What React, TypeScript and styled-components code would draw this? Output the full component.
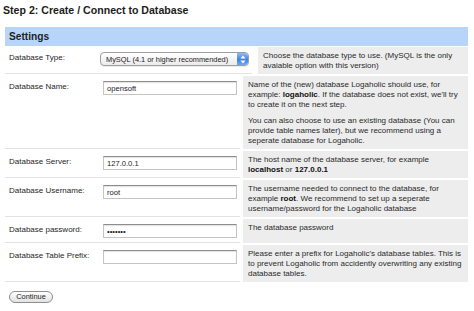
import React from "react";
import styled, { createGlobalStyle } from "styled-components";

const GlobalStyle = createGlobalStyle`
  html, body {
    margin: 0;
    padding: 0;
    background: #fff;
  }
  body {
    font-family: "Liberation Sans", Arial, Helvetica, sans-serif;
    color: #222;
  }
`;

const Page = styled.div`
  width: 474px;
  height: 311px;
  padding: 0 6px 0 5px;
  box-sizing: border-box;
  overflow: hidden;
`;

const Title = styled.h2`
  margin: 0 0 0 -2px;
  padding-top: 4px;
  height: 23px;
  box-sizing: border-box;
  font-size: 10.6px;
  font-weight: bold;
  line-height: 13px;
  color: #1c1c1c;
`;

const SectionHeader = styled.div`
  height: 19px;
  margin-top: 4px;
  background: #b7d5f8;
  display: flex;
  align-items: center;
  padding-left: 4px;
  font-size: 10.2px;
  font-weight: bold;
  color: #222;
  margin-bottom: 1px;
`;

const Rows = styled.div`
  display: flex;
  flex-direction: column;
  gap: 2px;
`;

const Row = styled.div`
  display: flex;
  align-items: stretch;
`;

const Field = styled.div<{ $width: number; $gap: number }>`
  width: ${(p) => p.$width}px;
  margin-right: ${(p) => p.$gap}px;
  flex-shrink: 0;
  display: flex;
  align-items: flex-start;
  padding: 5px 0 4px;
  box-sizing: border-box;
  border-bottom: 1px solid #e3e3e3;
`;

const Label = styled.div<{ $width: number }>`
  width: ${(p) => p.$width}px;
  padding-left: 4px;
  box-sizing: border-box;
  font-size: 8px;
  line-height: 12px;
  color: #262626;
`;

const Desc = styled.div`
  flex: 1;
  background: #ededed;
  padding: 4px 4px 3px 5px;
  font-size: 8px;
  line-height: 10px;
  color: #2a2a2a;

  b {
    font-weight: bold;
    color: #111;
  }
`;

const Para = styled.p`
  margin: 0;
  & + & {
    margin-top: 6px;
  }
`;

const TextInput = styled.input`
  width: 134px;
  height: 14px;
  box-sizing: border-box;
  margin: 0;
  padding: 0 3px;
  border: 1px solid #c4c4c4;
  border-top-color: #8e8e8e;
  box-shadow: inset 0 1px 1px rgba(0, 0, 0, 0.12);
  font-family: "Liberation Sans", Arial, sans-serif;
  font-size: 7.6px;
  color: #222;
  background: #fff;
  outline: none;
`;

const SelectBox = styled.div`
  width: 149px;
  height: 14px;
  box-sizing: border-box;
  display: flex;
  align-items: center;
  border: 1px solid #9d9d9d;
  border-radius: 4px;
  background: linear-gradient(#ffffff, #ebebeb);
  box-shadow: 0 1px 0 rgba(0, 0, 0, 0.08);
  padding-left: 5px;
  font-size: 7.4px;
  color: #222;
  overflow: hidden;
`;

const SelectText = styled.span`
  flex: 1;
  white-space: nowrap;
`;

const Stepper = styled.span`
  width: 11px;
  height: 12px;
  flex-shrink: 0;
  display: flex;
  align-items: center;
  justify-content: center;
  border-radius: 0 3px 3px 0;
  background: linear-gradient(#8dbdf6, #3f82e4 55%, #6ea8f0);
`;

const Footer = styled.div`
  padding: 9px 0 0 4px;
`;

const Button = styled.button`
  display: block;
  height: 12px;
  width: 44px;
  box-sizing: border-box;
  padding: 0;
  border: 1px solid #8f8f8f;
  border-radius: 6px;
  background: linear-gradient(#ffffff, #e2e2e2);
  font-family: "Liberation Sans", Arial, sans-serif;
  font-size: 7.4px;
  line-height: 10px;
  color: #222;
`;

const StepperIcon = () => (
  <svg width="6" height="9" viewBox="0 0 6 9">
    <path d="M3 0.5 L5.6 3.6 H0.4 Z" fill="#fff" />
    <path d="M3 8.5 L5.6 5.4 H0.4 Z" fill="#fff" />
  </svg>
);

type RowDef = {
  label: string;
  field: number;
  labelW: number;
  gap: number;
  control: React.ReactNode;
  desc: React.ReactNode;
};

const rows: RowDef[] = [
  {
    label: "Database Type:",
    field: 247,
    labelW: 95,
    gap: 6,
    control: (
      <SelectBox>
        <SelectText>MySQL (4.1 or higher recommended)</SelectText>
        <Stepper>
          <StepperIcon />
        </Stepper>
      </SelectBox>
    ),
    desc: (
      <Para>
        Choose the database type to use. (MySQL is the only avaiable option
        with this version)
      </Para>
    ),
  },
  {
    label: "Database Name:",
    field: 235,
    labelW: 98,
    gap: 3,
    control: <TextInput defaultValue="opensoft" readOnly />,
    desc: (
      <>
        <Para>
          Name of the (new) database Logaholic should use, for example:{" "}
          <b>logaholic</b>. If the database does not exist, we'll try to create
          it on the next step.
        </Para>
        <Para>
          You can also choose to use an existing database (You can provide
          table names later), but we recommend using a seperate database for
          Logaholic.
        </Para>
      </>
    ),
  },
  {
    label: "Database Server:",
    field: 235,
    labelW: 98,
    gap: 3,
    control: <TextInput defaultValue="127.0.0.1" readOnly />,
    desc: (
      <Para>
        The host name of the database server, for example <b>localhost</b> or{" "}
        <b>127.0.0.1</b>
      </Para>
    ),
  },
  {
    label: "Database Username:",
    field: 235,
    labelW: 98,
    gap: 3,
    control: <TextInput defaultValue="root" readOnly />,
    desc: (
      <Para>
        The username needed to connect to the database, for example{" "}
        <b>root</b>. We recommend to set up a seperate username/password for
        the Logaholic database
      </Para>
    ),
  },
  {
    label: "Database password:",
    field: 235,
    labelW: 98,
    gap: 3,
    control: <TextInput type="password" defaultValue="logahol" readOnly />,
    desc: <Para>The database password</Para>,
  },
  {
    label: "Database Table Prefix:",
    field: 235,
    labelW: 98,
    gap: 3,
    control: <TextInput defaultValue="" readOnly />,
    desc: (
      <Para>
        Please enter a prefix for Logaholic's database tables. This is to
        prevent Logaholic from accidently overwriting any existing database
        tables.
      </Para>
    ),
  },
];

export default function App() {
  return (
    <>
      <GlobalStyle />
      <Page>
        <Title>Step 2: Create / Connect to Database</Title>
        <SectionHeader>Settings</SectionHeader>
        <Rows>
          {rows.map((r) => (
            <Row key={r.label}>
              <Field $width={r.field} $gap={r.gap}>
                <Label $width={r.labelW}>{r.label}</Label>
                {r.control}
              </Field>
              <Desc>{r.desc}</Desc>
            </Row>
          ))}
        </Rows>
        <Footer>
          <Button type="button">Continue</Button>
        </Footer>
      </Page>
    </>
  );
}
